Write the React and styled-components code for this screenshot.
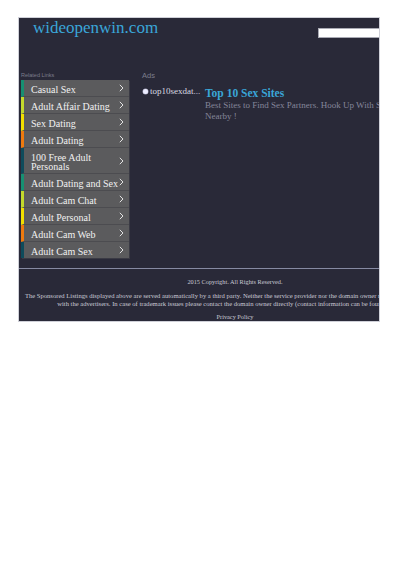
import React from "react";
import styled, { createGlobalStyle } from "styled-components";

const Global = createGlobalStyle`
  html, body { margin: 0; padding: 0; background: #ffffff; }
  body { font-family: "Liberation Serif", serif; }
`;

const Frame = styled.div`
  margin: 17px 0 0 18px;
  width: 360px;
  border: 1px solid #cfd0d8;
  background: #292938;
  overflow: hidden;
`;

const Inner = styled.div`
  width: 432px;
`;

const Header = styled.header`
  display: flex;
  align-items: flex-start;
  height: 53px;
  padding-left: 14px;
`;

const Logo = styled.a`
  margin-top: 1px;
  font-family: "Liberation Serif", serif;
  font-size: 17px;
  line-height: 18px;
  color: #3aa6d8;
  text-decoration: none;
`;

const Search = styled.input`
  margin: 10px 13px 0 auto;
  width: 120px;
  height: 10px;
  box-sizing: border-box;
  border: 1px solid #a9aab4;
  background: #ffffff;
  padding: 0;
`;

const Content = styled.div`
  display: flex;
  align-items: flex-start;
  padding-left: 2px;
`;

const Side = styled.aside`
  width: 109px;
  flex: none;
`;

const SmallLabel = styled.div`
  font-family: "Liberation Sans", sans-serif;
  font-size: ${(p) => p.$size}px;
  line-height: ${(p) => p.$lh}px;
  color: #7c7d8c;
`;

const Menu = styled.ul`
  list-style: none;
  margin: 1px 0 0;
  padding: 0;
  width: 108px;
  background: #5b5b5d;
  box-shadow: 1px 1px 0 #3a3a44;
`;

const Item = styled.li`
  display: flex;
  align-items: center;
  justify-content: space-between;
  border-left: 3px solid ${(p) => p.$color};
  border-bottom: 1px solid #4c4c50;
  padding: 4.5px 5px 2.5px 7px;
  font-size: 10px;
  line-height: 9px;
  color: #f1f1f1;
  white-space: nowrap;
  &:last-child { border-bottom: none; }
`;

const ChevronBox = styled.svg`
  flex: none;
  margin-top: -2px;
`;

const Chevron = () => (
  <ChevronBox width="5" height="8" viewBox="0 0 5 8">
    <polyline points="0.8,0.8 4,4 0.8,7.2" fill="none" stroke="#e2e2e2" strokeWidth="1" />
  </ChevronBox>
);

const Ads = styled.section`
  margin-left: 12px;
  flex: 1;
`;

const AdRow = styled.div`
  display: flex;
  align-items: flex-start;
  margin-top: 6px;
`;

const AdSource = styled.div`
  display: flex;
  align-items: center;
  width: 63px;
  flex: none;
  height: 10px;
`;

const Bullet = styled.span`
  width: 5px;
  height: 5px;
  border-radius: 50%;
  background: #ececff;
  box-shadow: 0 0 0 0.5px #9a9ab0;
  margin: 0 2px 0 1px;
  flex: none;
`;

const Domain = styled.span`
  font-size: 9px;
  line-height: 10px;
  color: #d9d9e2;
  white-space: nowrap;
`;

const AdBody = styled.div`
  width: 232px;
  flex: none;
  margin-top: 1px;
`;

const AdTitle = styled.a`
  display: block;
  font-size: 11.5px;
  font-weight: bold;
  line-height: 13px;
  color: #3aa6d8;
  text-decoration: none;
`;

const AdDesc = styled.p`
  margin: 0;
  font-size: 9px;
  line-height: 11px;
  color: #85869a;
`;

const Footer = styled.footer`
  margin-top: 10px;
  border-top: 1.5px solid #868aa2;
  padding-top: 9px;
  text-align: center;
  color: #c9cad6;
`;

const FootLine = styled.p`
  margin: 0 0 ${(p) => p.$mb}px;
  font-size: ${(p) => p.$size}px;
  line-height: ${(p) => p.$lh}px;
  white-space: nowrap;
`;

const links = [
  ["Casual Sex", "#169072"],
  ["Adult Affair Dating", "#c3d92c"],
  ["Sex Dating", "#f2df00"],
  ["Adult Dating", "#ee7a0e"],
  ["100 Free Adult Personals", "#0e4b5b"],
  ["Adult Dating and Sex", "#169072"],
  ["Adult Cam Chat", "#c3d92c"],
  ["Adult Personal", "#f2df00"],
  ["Adult Cam Web", "#ee7a0e"],
  ["Adult Cam Sex", "#0e4b5b"],
];

export default function App() {
  return (
    <>
      <Global />
      <Frame>
        <Inner>
          <Header>
            <Logo href="#">wideopenwin.com</Logo>
            <Search type="text" />
          </Header>
          <Content>
            <Side>
              <SmallLabel $size={5.5} $lh={8}>Related Links</SmallLabel>
              <Menu>
                {links.map(([t, c]) => (
                  <Item key={t} $color={c}>
                    <span>
                      {t === "100 Free Adult Personals" ? (
                        <>100 Free Adult<br />Personals</>
                      ) : (
                        t
                      )}
                    </span>
                    <Chevron />
                  </Item>
                ))}
              </Menu>
            </Side>
            <Ads>
              <SmallLabel $size={7.5} $lh={9}>Ads</SmallLabel>
              <AdRow>
                <AdSource>
                  <Bullet />
                  <Domain>top10sexdat...</Domain>
                </AdSource>
                <AdBody>
                  <AdTitle href="#">Top 10 Sex Sites</AdTitle>
                  <AdDesc>Best Sites to Find Sex Partners. Hook Up With Sex Partners Nearby !</AdDesc>
                </AdBody>
              </AdRow>
            </Ads>
          </Content>
          <Footer>
            <FootLine $size={6.3} $lh={8} $mb={6}>2015 Copyright. All Rights Reserved.</FootLine>
            <FootLine $size={6.6} $lh={7.5} $mb={6}>
              The Sponsored Listings displayed above are served automatically by a third party. Neither the service provider nor the domain owner maintain any relationship
              <br />
              with the advertisers. In case of trademark issues please contact the domain owner directly (contact information can be found in whois).
            </FootLine>
            <FootLine $size={6.3} $lh={8} $mb={0}>Privacy Policy</FootLine>
          </Footer>
        </Inner>
      </Frame>
    </>
  );
}
